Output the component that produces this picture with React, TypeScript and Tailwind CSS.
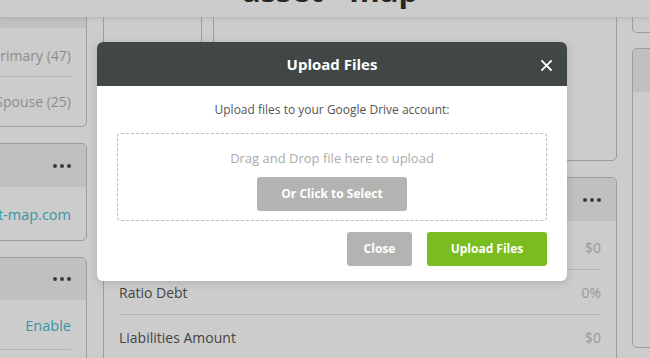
import React from "react";

function Dots() {
  return (
    <div className="flex gap-[3px]">
      <span className="w-[4px] h-[4px] rounded-full bg-[#3a3a3a]" />
      <span className="w-[4px] h-[4px] rounded-full bg-[#3a3a3a]" />
      <span className="w-[4px] h-[4px] rounded-full bg-[#3a3a3a]" />
    </div>
  );
}

function LeftColumn() {
  return (
    <div className="w-[100px] ml-[-13px] flex flex-col gap-[16px] shrink-0">
      <div className="mt-[-20px] border border-[#9d9d9d] rounded-[5px] bg-[#cccccc] overflow-hidden">
        <div className="h-[30px] bg-[#c0c0c0]" />
        <div className="mr-[15px] h-[49px] pt-[7px] flex items-center justify-end border-b border-[#b5b5b5] text-[14px] text-[#8c8c8c] whitespace-nowrap">
          Primary (47)
        </div>
        <div className="mr-[15px] h-[49px] flex items-center justify-end text-[14px] text-[#8c8c8c] whitespace-nowrap">
          Spouse (25)
        </div>
      </div>
      <div className="border border-[#9d9d9d] rounded-[5px] bg-[#cccccc] overflow-hidden">
        <div className="h-[43px] bg-[#c0c0c0] flex items-center justify-end pr-[15px]">
          <Dots />
        </div>
        <div className="h-[53px] pr-[15px] pt-[3px] flex items-center justify-end text-[14.5px] text-[#3a95a3] whitespace-nowrap">
          asset-map.com
        </div>
      </div>
      <div className="border border-[#9d9d9d] rounded-[5px] bg-[#cccccc] overflow-hidden h-[140px]">
        <div className="h-[42px] bg-[#c0c0c0] flex items-center justify-end pr-[15px]">
          <Dots />
        </div>
        <div className="mr-[15px] h-[50px] pt-[3px] flex items-center justify-end border-b border-[#b5b5b5] text-[14.5px] text-[#3a95a3]">
          Enable
        </div>
      </div>
    </div>
  );
}

function Row({ label, value, first }: { label: string; value: string; first?: boolean }) {
  return (
    <div
      className={
        "mx-[15px] flex items-center justify-between border-b border-[#b5b5b5] text-[14px] " +
        (first ? "h-[49px] pt-[5px]" : "h-[45px]")
      }
    >
      <span className="text-[#444444]">{label}</span>
      <span className="text-[#999999]">{value}</span>
    </div>
  );
}

function MiddleColumn() {
  return (
    <div className="w-[514px] ml-[16px] flex flex-col gap-[16px] shrink-0">
      <div className="flex gap-[11px] mt-[-20px] h-[164px]">
        <div className="w-[99px] border border-[#9d9d9d] rounded-[5px] bg-[#cccccc]" />
        <div className="flex-1 border border-[#9d9d9d] rounded-[5px] bg-[#cccccc]" />
      </div>
      <div className="border border-[#9d9d9d] rounded-[5px] bg-[#cccccc] overflow-hidden h-[200px]">
        <div className="h-[43px] bg-[#c0c0c0] flex items-center justify-end pr-[15px]">
          <Dots />
        </div>
        <Row label="Assets Amount" value="$0" first />
        <Row label="Ratio Debt" value="0%" />
        <Row label="Liabilities Amount" value="$0" />
      </div>
    </div>
  );
}

function RightColumn() {
  return (
    <div className="w-[40px] ml-[15px] flex flex-col gap-[15px] shrink-0">
      <div className="mt-[-20px] h-[36px] border border-[#9d9d9d] rounded-[5px] bg-[#cccccc]" />
      <div className="h-[300px] border border-[#9d9d9d] rounded-[5px] bg-[#cccccc] overflow-hidden">
        <div className="h-[43px] bg-[#c0c0c0]" />
      </div>
    </div>
  );
}

function UploadModal() {
  return (
    <div className="absolute left-[97px] top-[42px] w-[470px] bg-white rounded-[6px] shadow-[0_2px_8px_rgba(0,0,0,0.15)]">
      <div className="relative h-[44px] bg-[#404746] rounded-t-[6px] flex items-center justify-center">
        <span className="text-white text-[15px] font-bold leading-none">Upload Files</span>
        <svg
          className="absolute right-[15px] top-[18px]"
          width="11"
          height="11"
          viewBox="0 0 11 11"
          fill="none"
          stroke="white"
          strokeWidth="1.8"
          strokeLinecap="square"
        >
          <path d="M1 1L10 10M10 1L1 10" />
        </svg>
      </div>
      <div className="px-[20px] pt-[15px] pb-[15px]">
        <p className="text-center text-[12px] leading-[18px] text-[#555555]">
          Upload files to your Google Drive account:
        </p>
        <div className="mt-[14px] h-[88px] border border-dashed border-[#bdbdbd] rounded-[4px] flex flex-col items-center pt-[14px]">
          <p className="text-[13px] leading-[20px] text-[#ababab]">Drag and Drop file here to upload</p>
          <button className="mt-[9px] w-[150px] h-[34px] rounded-[3px] bg-[#b3b4b1] text-white text-[12px] font-bold">
            Or Click to Select
          </button>
        </div>
        <div className="mt-[11px] flex justify-end gap-[15px]">
          <button className="w-[65px] h-[34px] rounded-[3px] bg-[#b3b4b1] text-white text-[12px] font-bold">
            Close
          </button>
          <button className="w-[120px] h-[34px] rounded-[3px] bg-[#79bd20] text-white text-[12px] font-bold">
            Upload Files
          </button>
        </div>
      </div>
    </div>
  );
}

export default function App() {
  return (
    <div
      className="relative w-[650px] h-[358px] overflow-hidden bg-[#cccccc]"
      style={{ fontFamily: '"Open Sans", "Liberation Sans", sans-serif' }}
    >
      <div className="relative z-10 h-[17px] bg-[#cccccc] shadow-[0_2px_3px_rgba(0,0,0,0.08)] flex justify-center overflow-hidden">
        <span className="mt-[-25px] ml-[10px] text-[31px] leading-none font-bold text-[#262626] whitespace-nowrap">
          asset - map
        </span>
      </div>
      <div className="flex">
        <LeftColumn />
        <MiddleColumn />
        <RightColumn />
      </div>
      <UploadModal />
    </div>
  );
}
